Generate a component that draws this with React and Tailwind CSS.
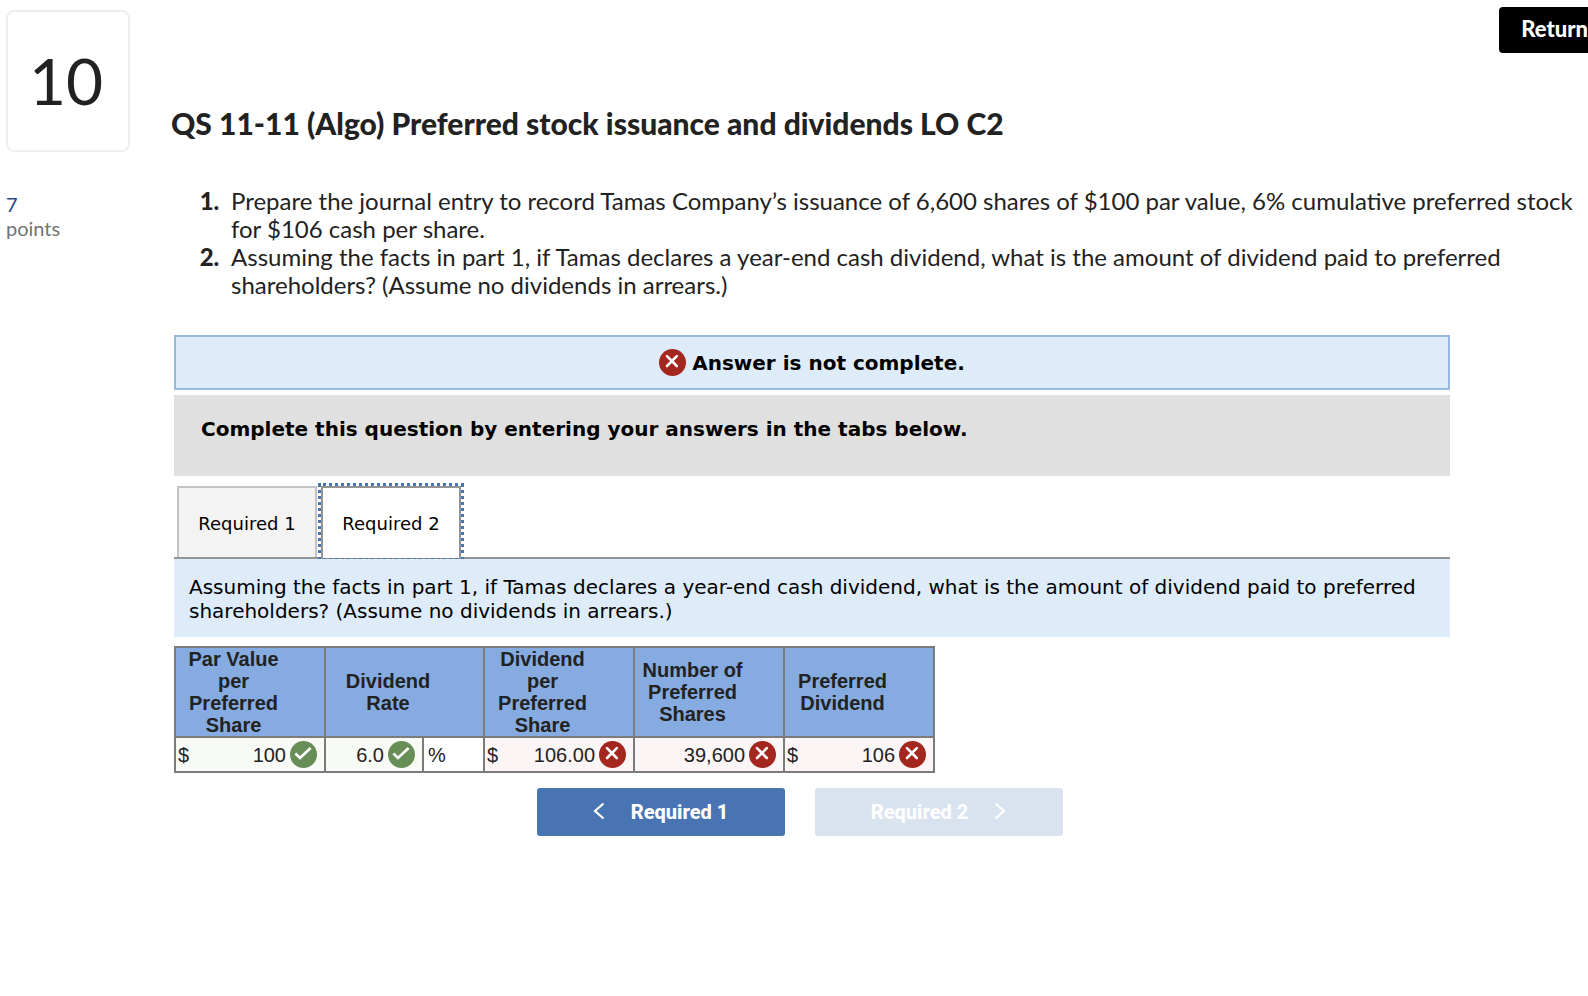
import { useState } from "react";
import clsx from "clsx";

const TABS = ["Required 1", "Required 2"];

const COLUMNS = [
  { header: "Par Value per Preferred Share", span: 1 },
  { header: "Dividend Rate", span: 2 },
  { header: "Dividend per Preferred Share", span: 1 },
  { header: "Number of Preferred Shares", span: 1 },
  { header: "Preferred Dividend", span: 1 },
];

const ANSWERS = [
  { label: "Par value per preferred share", prefix: "$", value: "100", correct: true },
  { label: "Dividend rate", value: "6.0", correct: true, suffix: "%" },
  { label: "Dividend per preferred share", prefix: "$", value: "106.00", correct: false },
  { label: "Number of preferred shares", value: "39,600", correct: false },
  { label: "Preferred dividend", prefix: "$", value: "106", correct: false },
];

function StatusIcon({ correct }) {
  return (
    <svg
      className="size-[27px] shrink-0"
      viewBox="0 0 27 27"
      fill="none"
      aria-hidden="true"
    >
      <circle cx="13.5" cy="13.5" r="13.5" fill={correct ? "#688e58" : "#a3271f"} />
      {correct ? (
        <path d="M5.4 12.6l4.6 4.3L20.6 7" stroke="#fff" strokeWidth="2.7" />
      ) : (
        <path
          d="M8 7.2l9.8 9.8M17.8 7.2L8 17"
          stroke="#fff"
          strokeWidth="2.6"
          strokeLinecap="round"
        />
      )}
    </svg>
  );
}

function Chevron({ direction }) {
  return (
    <svg className="h-5 w-3" viewBox="0 0 12 20" fill="none" aria-hidden="true">
      <path
        d={direction === "left" ? "M10.5 1.5L2 9l8.5 7.5" : "M1.5 1.5L10 9l-8.5 7.5"}
        stroke="currentColor"
        strokeWidth="2.2"
      />
    </svg>
  );
}

function AnswerCell({ label, prefix, value, correct }) {
  return (
    <td
      className={clsx(
        "h-[35px] border-2 border-[#7b7b7b] p-0",
        correct ? "bg-[#f8faf5]" : "bg-[#fcf5f5]"
      )}
    >
      <div className="flex items-center gap-1 pr-[7px] pl-[2px]">
        {prefix && <span>{prefix}</span>}
        <input
          aria-label={label}
          defaultValue={value}
          className="min-w-0 flex-1 bg-transparent text-right outline-none"
        />
        <StatusIcon correct={correct} />
      </div>
    </td>
  );
}

function AnswerTable() {
  return (
    <table className="mt-[9px] w-[761px] table-fixed border-collapse font-['Liberation_Sans',sans-serif] text-[20px] leading-[22px] text-[#222]">
      <colgroup>
        <col className="w-[150px]" />
        <col className="w-[98px]" />
        <col className="w-[61px]" />
        <col className="w-[150px]" />
        <col className="w-[150px]" />
        <col className="w-[150px]" />
      </colgroup>
      <thead>
        <tr>
          {COLUMNS.map(({ header, span }) => (
            <th
              key={header}
              colSpan={span}
              className="h-[90px] border-2 border-[#7b7b7b] bg-[#85abe0] py-0 pr-[33px] pl-0 text-center align-middle font-bold"
            >
              {header}
            </th>
          ))}
        </tr>
      </thead>
      <tbody>
        <tr>
          {ANSWERS.map((answer) => [
            <AnswerCell key={answer.label} {...answer} />,
            answer.suffix && (
              <td key="suffix" className="border-2 border-[#7b7b7b] px-1 py-0">
                {answer.suffix}
              </td>
            ),
          ])}
        </tr>
      </tbody>
    </table>
  );
}

function Tabs({ active, onSelect }) {
  return (
    <div role="tablist" className="flex gap-1 border-b-2 border-[#949494] px-[3px] pt-[10px]">
      {TABS.map((tab) => (
        <button
          key={tab}
          type="button"
          role="tab"
          aria-selected={tab === active}
          onClick={() => onSelect(tab)}
          className={clsx(
            "w-[140px] border-2 border-b-0 pt-px text-[18px]",
            tab === active
              ? "relative -mb-px h-[72px] border-[#949494] bg-white outline-3 outline-dotted outline-[#4874b4]"
              : "h-[71px] border-[#c3c3c3] bg-[#f3f3f3]"
          )}
        >
          {tab}
        </button>
      ))}
    </div>
  );
}

export default function App() {
  const [active, setActive] = useState("Required 2");

  return (
    <div className="flex min-h-screen overflow-hidden bg-white font-[Lato,sans-serif] text-[#222]">
      <aside className="w-[171px] shrink-0 pt-[10px] pl-[6px]">
        <div className="flex h-[142px] w-[124px] items-center justify-center rounded-lg border-2 border-[#eee] pr-1 text-[64px]">
          10
        </div>
        <div className="mt-10 text-[20px] leading-6">
          <p className="text-[#1f4788]">7</p>
          <p className="text-[#737373]">points</p>
        </div>
      </aside>

      <main className="min-w-0 flex-1">
        <div className="flex justify-end pt-[7px]">
          <button
            type="button"
            className="h-[46px] rounded-l bg-black pb-[3px] pl-[22px] text-[22px] font-black text-white"
          >
            Return
          </button>
        </div>

        <h1 className="mt-[52px] text-[30px] leading-9 font-black">
          QS 11-11 (Algo) Preferred stock issuance and dividends LO C2
        </h1>

        <ol className="mt-[46px] list-decimal pr-2 pl-[54px] text-[24px] leading-7 marker:font-black">
          <li className="pl-[6px]">
            Prepare the journal entry to record Tamas Company’s issuance of 6,600 shares of
            $100 par value, 6% cumulative preferred stock for $106 cash per share.
          </li>
          <li className="pl-[6px]">
            Assuming the facts in part 1, if Tamas declares a year-end cash dividend, what
            is the amount of dividend paid to preferred shareholders? (Assume no dividends
            in arrears.)
          </li>
        </ol>

        <section className="mt-[36px] mr-[138px] ml-[3px] font-['DejaVu_Sans',sans-serif] text-black">
          <div className="flex h-[55px] items-center justify-center gap-[6px] border-2 border-[#98b8de] bg-[#deebf9] text-[20px] leading-6 font-bold">
            <StatusIcon correct={false} />
            Answer is not complete.
          </div>

          <div className="mt-[5px] h-[81px] bg-[#e0e0e0] px-[27px] pt-[22px] text-[20px] leading-6 font-bold">
            Complete this question by entering your answers in the tabs below.
          </div>

          <Tabs active={active} onSelect={setActive} />

          <p className="relative bg-[#deebf9] px-[15px] pt-4 pb-[14px] text-[20px] leading-6">
            Assuming the facts in part 1, if Tamas declares a year-end cash dividend, what is
            the amount of dividend paid to preferred shareholders? (Assume no dividends in
            arrears.)
          </p>

          <AnswerTable />

          <div className="mt-[15px] mr-[25px] flex justify-center gap-[30px] font-[Roboto,sans-serif] text-[20px] font-extrabold">
            <button
              type="button"
              onClick={() => setActive("Required 1")}
              className="flex h-12 w-[248px] items-center justify-center gap-[26px] rounded-[3px] bg-[#4874b4] text-white"
            >
              <Chevron direction="left" />
              Required 1
            </button>
            <button
              type="button"
              disabled
              className="flex h-12 w-[248px] items-center justify-center gap-[26px] rounded-[3px] bg-[#d9e3f0] text-white"
            >
              Required 2
              <Chevron direction="right" />
            </button>
          </div>
        </section>
      </main>
    </div>
  );
}
